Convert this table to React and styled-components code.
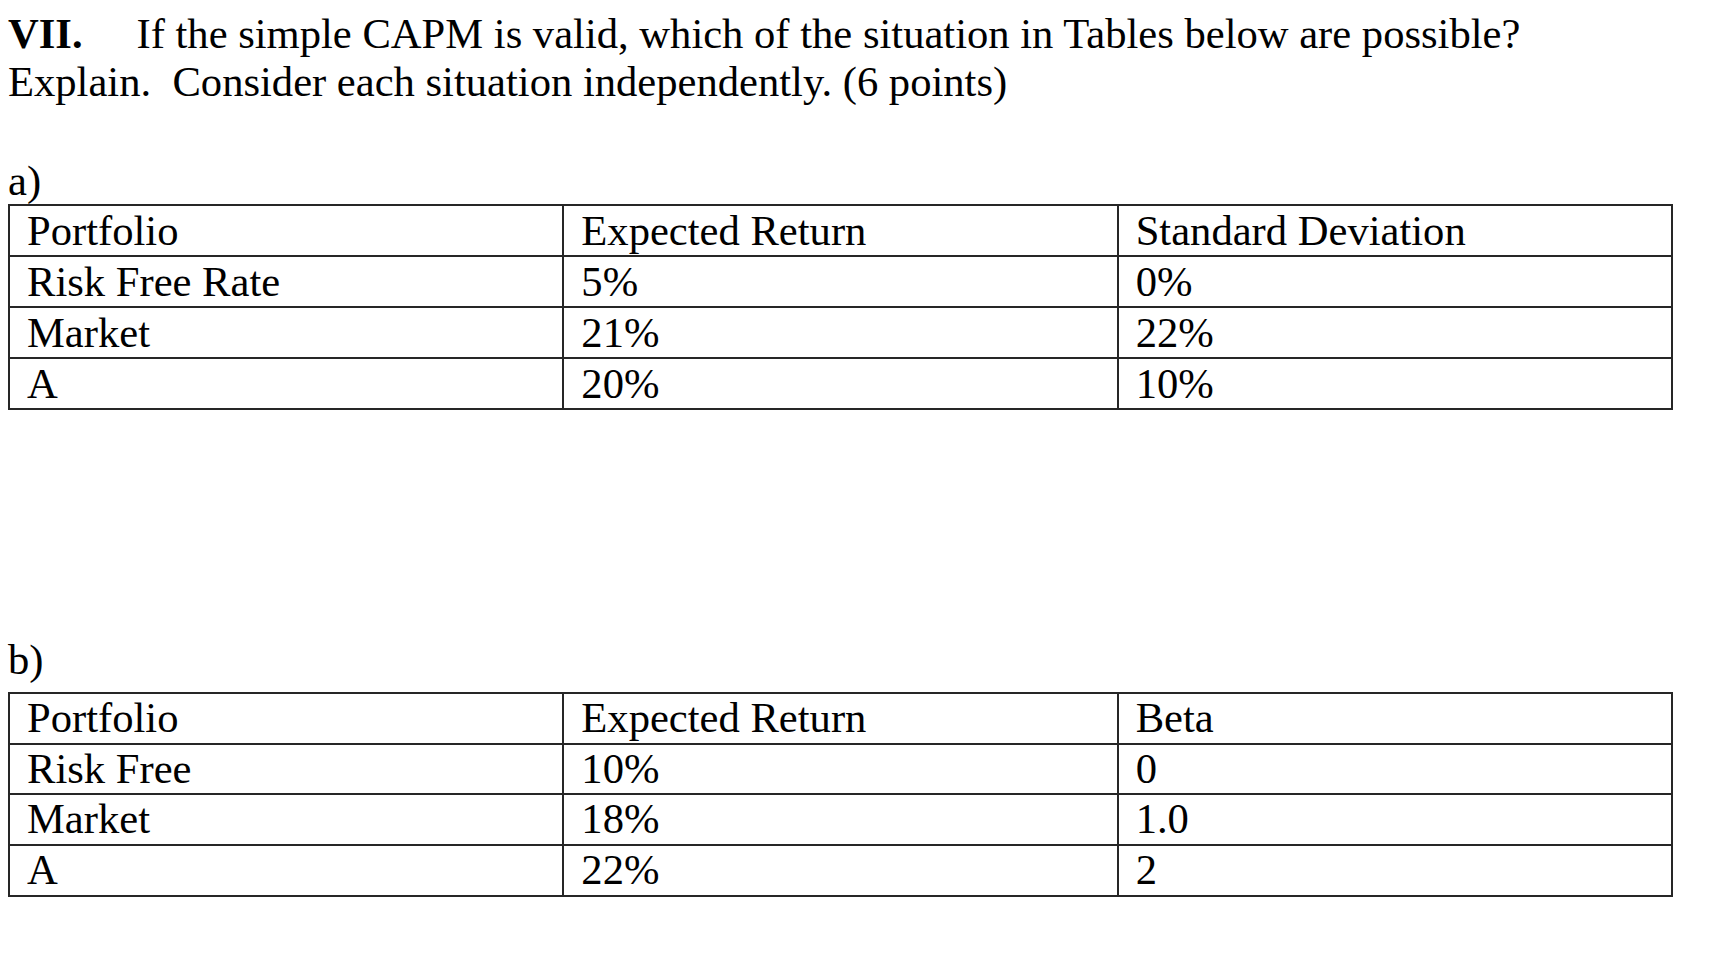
import React from "react";
import styled, { createGlobalStyle } from "styled-components";

const GlobalStyle = createGlobalStyle`
  html, body {
    margin: 0;
    padding: 0;
    background: #ffffff;
  }
  body {
    font-family: "Liberation Serif", "Times New Roman", serif;
    color: #000000;
  }
`;

const Page = styled.div`
  padding: 10px 0 0 8px;
  font-size: 42.6px;
  line-height: 48.4px;
`;

const Question = styled.div`
  white-space: pre-wrap;
`;

const Line = styled.div``;

const Numeral = styled.span`
  display: inline-block;
  width: 128.5px;
  font-weight: bold;
`;

const Label = styled.div`
  margin-top: ${(p) => p.$top}px;
  margin-bottom: ${(p) => p.$bottom}px;
  line-height: 47.5px;
`;

const Table = styled.table`
  width: 1665px;
  border-collapse: collapse;
  table-layout: fixed;
`;

const Cell = styled.td`
  border: 2px solid #262626;
  height: ${(p) => p.$h}px;
  padding: 0 17px;
  line-height: ${(p) => p.$h}px;
  vertical-align: top;
  white-space: nowrap;
`;

const tableA = [
  ["Portfolio", "Expected Return", "Standard Deviation"],
  ["Risk Free Rate", "5%", "0%"],
  ["Market", "21%", "22%"],
  ["A", "20%", "10%"],
];

const tableB = [
  ["Portfolio", "Expected Return", "Beta"],
  ["Risk Free", "10%", "0"],
  ["Market", "18%", "1.0"],
  ["A", "22%", "2"],
];

function DataTable({ rows, rowHeight }) {
  return (
    <Table>
      <colgroup>
        <col />
        <col />
        <col />
      </colgroup>
      <tbody>
        {rows.map((r, i) => (
          <tr key={i}>
            {r.map((c, j) => (
              <Cell key={j} $h={rowHeight}>
                {c}
              </Cell>
            ))}
          </tr>
        ))}
      </tbody>
    </Table>
  );
}

export default function App() {
  return (
    <>
      <GlobalStyle />
      <Page>
        <Question>
          <Line>
            <Numeral>VII.</Numeral>If the simple CAPM is valid, which of the situation in Tables below are possible?
          </Line>
          <Line>{"Explain.  Consider each situation independently. (6 points)"}</Line>
        </Question>
        <Label $top={50} $bottom={0}>a)</Label>
        <DataTable rows={tableA} rowHeight={49} />
        <Label $top={226} $bottom={8}>b)</Label>
        <DataTable rows={tableB} rowHeight={48.8} />
      </Page>
    </>
  );
}
